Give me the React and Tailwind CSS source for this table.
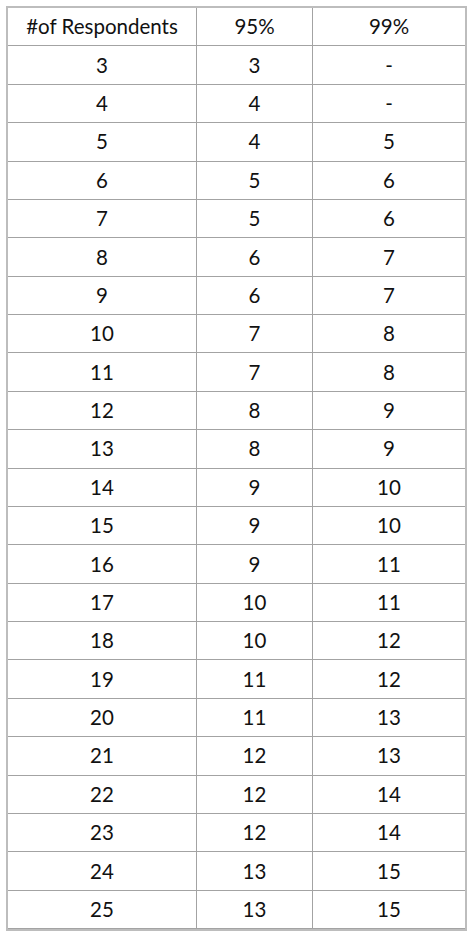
const rows = [
  [3, 3, '-'],
  [4, 4, '-'],
  [5, 4, 5],
  [6, 5, 6],
  [7, 5, 6],
  [8, 6, 7],
  [9, 6, 7],
  [10, 7, 8],
  [11, 7, 8],
  [12, 8, 9],
  [13, 8, 9],
  [14, 9, 10],
  [15, 9, 10],
  [16, 9, 11],
  [17, 10, 11],
  [18, 10, 12],
  [19, 11, 12],
  [20, 11, 13],
  [21, 12, 13],
  [22, 12, 14],
  [23, 12, 14],
  [24, 13, 15],
  [25, 13, 15],
];

function Cell({ children, last }) {
  return (
    <div
      className={[
        'flex items-center justify-center border-b border-[#a3a3a3]',
        last ? '' : 'border-r',
      ].join(' ')}
    >
      {children}
    </div>
  );
}

export default function App() {
  return (
    <div className="min-h-[937px] bg-white pl-[6px] pt-[6px] font-['Lato',sans-serif] text-[20.5px] text-[#111]">
      <div className="h-[925px] w-[461px] border-2 border-[#bdbdbd]">
        <div className="grid h-full grid-cols-[189px_116px_1fr] grid-rows-[repeat(24,1fr)] -mb-px">
          <Cell>#of Respondents</Cell>
          <Cell>95%</Cell>
          <Cell last>99%</Cell>
          {rows.map((r) => (
            <div key={r[0]} className="contents">
              <Cell>{r[0]}</Cell>
              <Cell>{r[1]}</Cell>
              <Cell last>{r[2]}</Cell>
            </div>
          ))}
        </div>
      </div>
    </div>
  );
}
